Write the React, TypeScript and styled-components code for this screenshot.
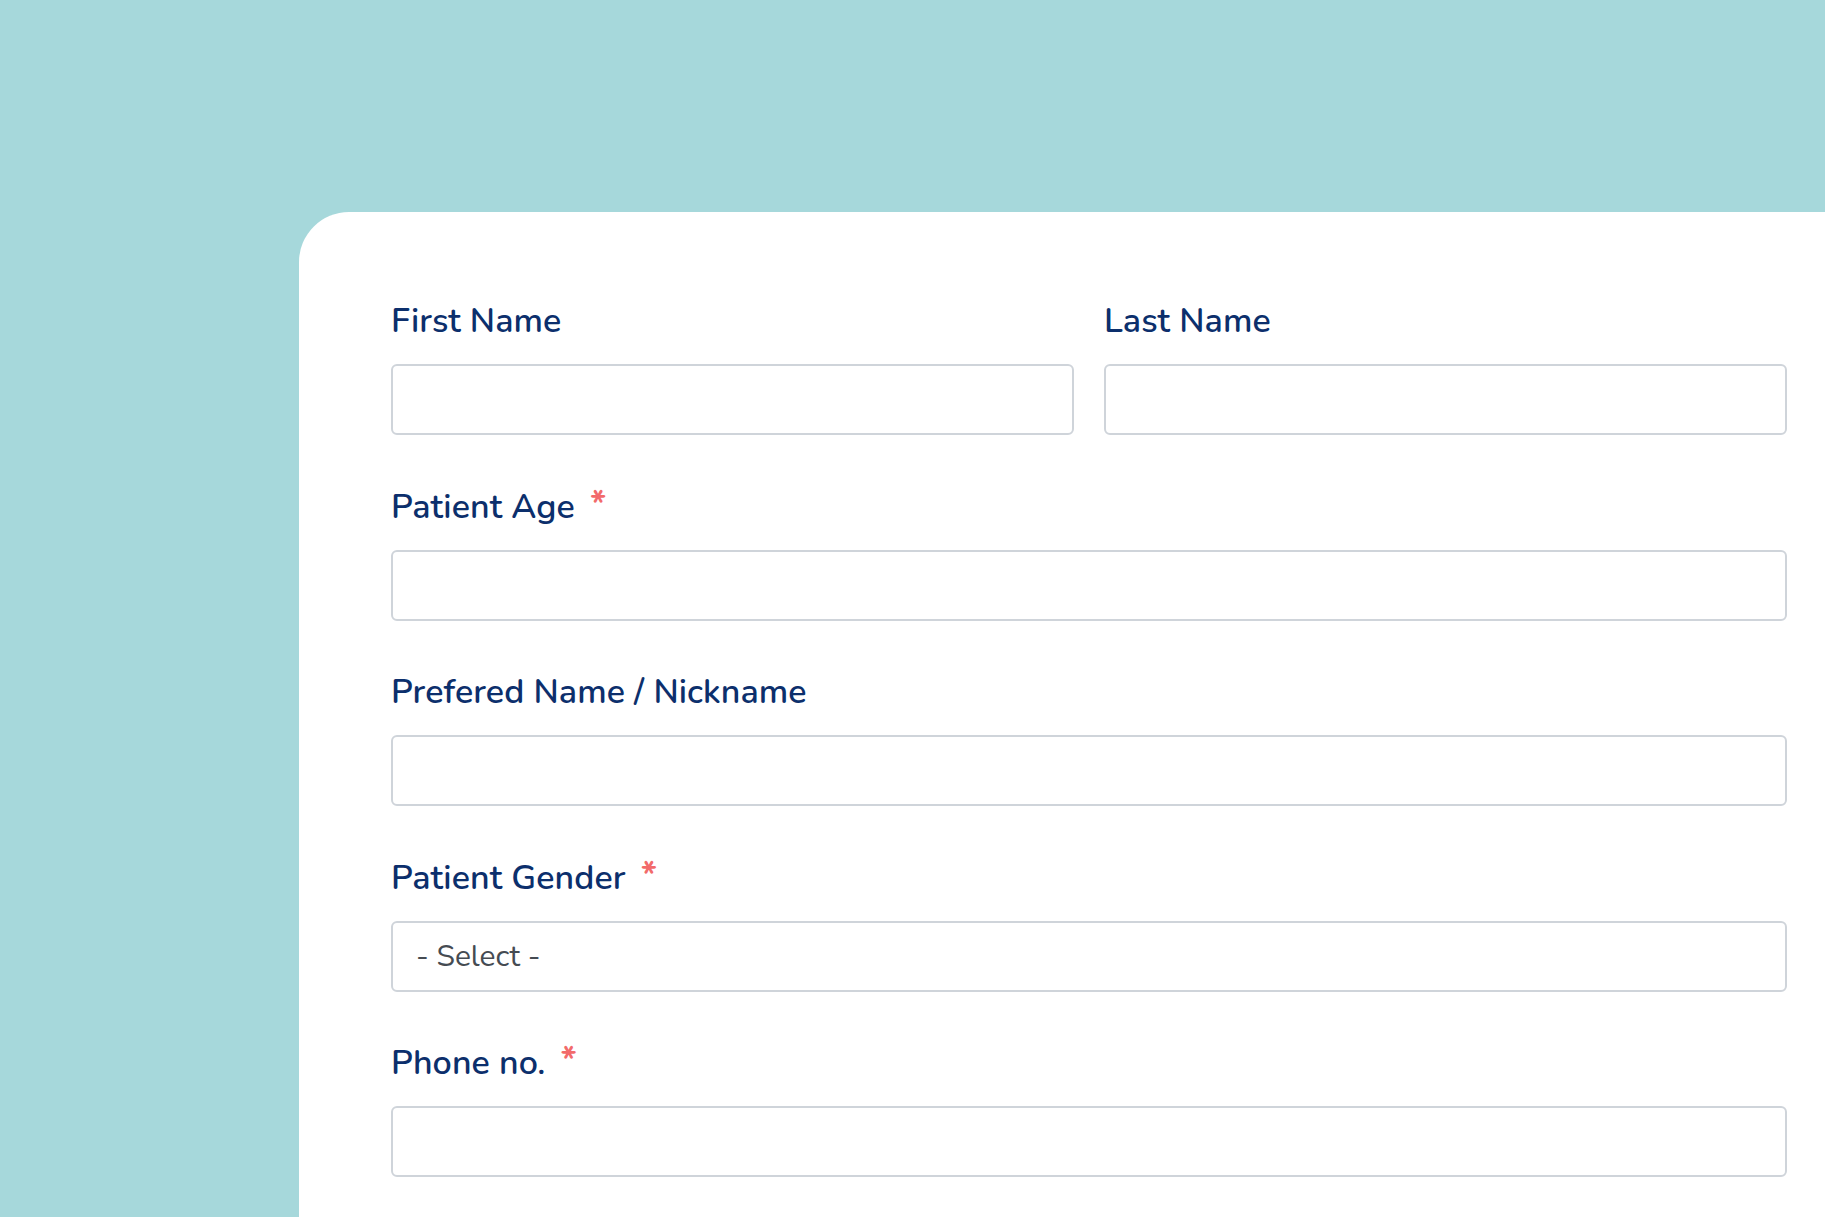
import React from "react";
import styled, { createGlobalStyle } from "styled-components";

const Global = createGlobalStyle`
  html, body { margin: 0; padding: 0; }
  body {
    background: #a6d8db;
    font-family: "Nunito", "Lato", "Noto Sans", sans-serif;
    overflow: hidden;
  }
`;

const Page = styled.div`
  width: 1825px;
  height: 1217px;
  padding: 212px 0 0 299px;
  box-sizing: border-box;
  overflow: hidden;
`;

const Card = styled.div`
  background: #ffffff;
  border-top-left-radius: 50px;
  height: 1100px;
  padding: 88px 38px 0 92px;
  box-sizing: border-box;
  display: flex;
  flex-direction: column;
  gap: 50.5px;
`;

const Row = styled.div<{ $cols?: number }>`
  display: grid;
  grid-template-columns: repeat(${(p) => p.$cols ?? 1}, 1fr);
  column-gap: 30px;
`;

const Field = styled.div`
  display: flex;
  flex-direction: column;
  gap: 22px;
`;

const Label = styled.label`
  font-size: 34px;
  line-height: 42px;
  font-weight: 600;
  color: #0c2f6c;
  display: flex;
  align-items: flex-start;
  gap: 15px;
  letter-spacing: 0.1px;
`;

const Star = styled.span`
  color: #f26b6b;
  font-size: 36px;
  line-height: 38px;
  font-weight: 700;
`;

const Input = styled.div`
  height: 71px;
  box-sizing: border-box;
  border: 2px solid #cfd4da;
  border-radius: 6px;
  background: #fff;
  display: flex;
  align-items: center;
  padding: 0 23px;
`;

const SelectText = styled.span`
  font-size: 30px;
  color: #454b52;
  font-weight: 400;
`;

function FormField({ label, required, children }: { label: string; required?: boolean; children?: React.ReactNode }) {
  return (
    <Field>
      <Label>
        {label}
        {required && <Star>*</Star>}
      </Label>
      <Input>{children}</Input>
    </Field>
  );
}

export default function App() {
  return (
    <>
      <Global />
      <Page>
        <Card>
          <Row $cols={2}>
            <FormField label="First Name" />
            <FormField label="Last Name" />
          </Row>
          <Row>
            <FormField label="Patient Age" required />
          </Row>
          <Row>
            <FormField label="Prefered Name / Nickname" />
          </Row>
          <Row>
            <FormField label="Patient Gender" required>
              <SelectText>- Select -</SelectText>
            </FormField>
          </Row>
          <Row>
            <FormField label="Phone no." required />
          </Row>
        </Card>
      </Page>
    </>
  );
}
